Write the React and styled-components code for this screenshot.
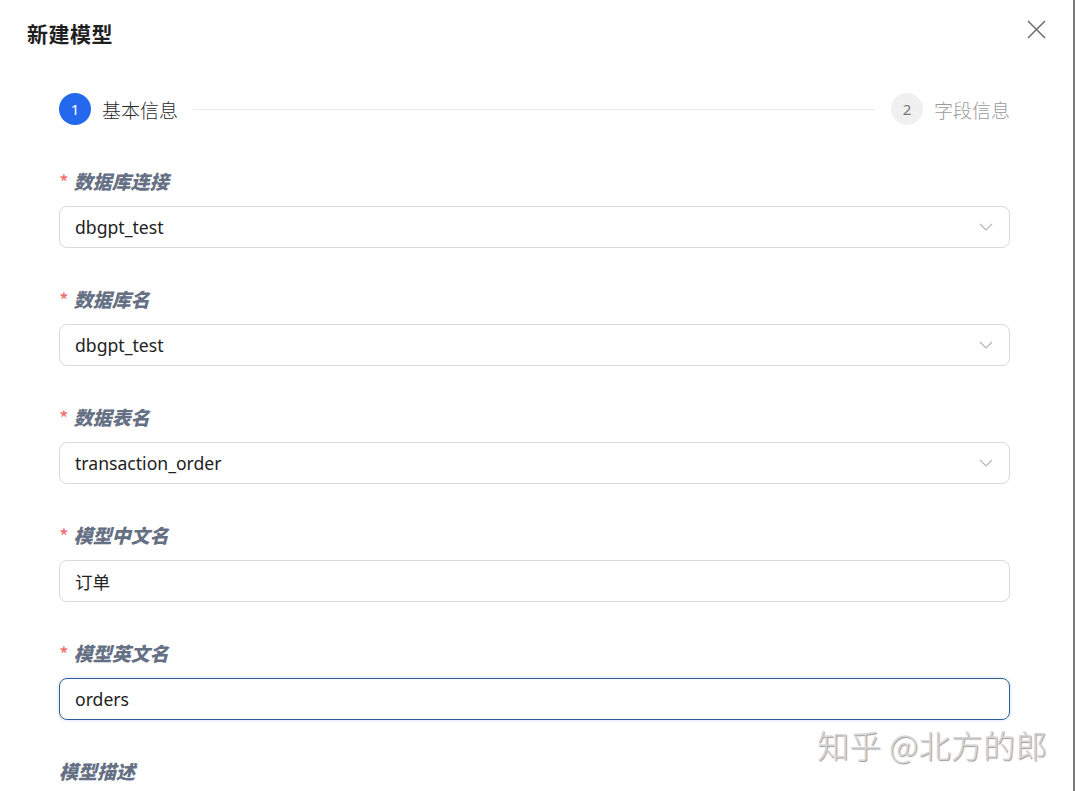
import React from "react";
import styled, { createGlobalStyle } from "styled-components";

const GlobalStyle = createGlobalStyle`
  html, body {
    margin: 0;
    padding: 0;
    background: #ffffff;
  }
  body {
    font-family: "Noto Sans", "Noto Sans CJK SC", sans-serif;
  }
`;

const fields = [
  { label: "数据库连接", value: "dbgpt_test", required: true, select: true },
  { label: "数据库名", value: "dbgpt_test", required: true, select: true },
  { label: "数据表名", value: "transaction_order", required: true, select: true },
  { label: "模型中文名", value: "订单", required: true },
  { label: "模型英文名", value: "orders", required: true, focused: true },
];

function App() {
  return (
    <>
      <GlobalStyle />
      <Drawer>
        <Header>
          <Title>新建模型</Title>
          <CloseButton aria-label="close">
            <svg width="19" height="19" viewBox="0 0 19 19">
              <path d="M1 1 L18 18 M18 1 L1 18" stroke="#6f6f6f" strokeWidth="1.6" fill="none" />
            </svg>
          </CloseButton>
        </Header>

        <Body>
          <Steps>
            <Step>
              <StepDot active>1</StepDot>
              <StepLabel active>基本信息</StepLabel>
            </Step>
            <StepLine />
            <Step>
              <StepDot>2</StepDot>
              <StepLabel>字段信息</StepLabel>
            </Step>
          </Steps>

          <Form>
            {fields.map((f) => (
              <Field key={f.label}>
                <Label>
                  {f.required && <Star>*</Star>}
                  {f.label}
                </Label>
                <Input focused={f.focused}>
                  <span>{f.value}</span>
                  {f.select && (
                    <svg width="14" height="14" viewBox="0 0 14 14">
                      <path d="M1 4 L7 10 L13 4" stroke="#b5b5b5" strokeWidth="1.2" fill="none" />
                    </svg>
                  )}
                </Input>
              </Field>
            ))}
            <Field>
              <Label>模型描述</Label>
            </Field>
          </Form>
        </Body>
        <Watermark>知乎 @北方的郎</Watermark>
      </Drawer>
    </>
  );
}

const Drawer = styled.div`
  position: relative;
  width: 1073px;
  height: 791px;
  overflow: hidden;
  border-right: 2px solid #7a7a7a;
  background: #fff;
`;

const Header = styled.div`
  display: flex;
  align-items: center;
  justify-content: space-between;
  padding: 15px 27px 0 27px;
  height: 36px;
`;

const Title = styled.h2`
  margin: 0;
  font-family: "Noto Sans CJK SC", sans-serif;
  font-size: 21px;
  font-weight: 700;
  color: #1f1f1f;
  letter-spacing: 0.5px;
`;

const CloseButton = styled.button`
  border: none;
  background: none;
  padding: 0;
  display: flex;
  margin-top: -8px;
`;

const Body = styled.div`
  padding: 42px 63px 0 59px;
`;

const Steps = styled.div`
  display: flex;
  align-items: center;
  height: 32px;
`;

const Step = styled.div`
  display: flex;
  align-items: center;
  gap: 11px;
`;

const StepDot = styled.div`
  width: 32px;
  height: 32px;
  border-radius: 50%;
  display: flex;
  align-items: center;
  justify-content: center;
  font-size: 15px;
  background: ${(p) => (p.active ? "#2468ee" : "#f0f0f0")};
  color: ${(p) => (p.active ? "#fff" : "#777")};
`;

const StepLabel = styled.span`
  font-family: "Noto Sans CJK SC", sans-serif;
  font-size: 19px;
  font-weight: 300;
  color: ${(p) => (p.active ? "#2a2a2a" : "#9a9a9a")};
`;

const StepLine = styled.div`
  flex: 1;
  height: 1px;
  background: #e9e9e9;
  margin: 0 16px 0 15px;
`;

const Form = styled.div`
  display: flex;
  flex-direction: column;
  gap: 38px;
  margin-top: 43px;
`;

const Field = styled.div`
  display: flex;
  flex-direction: column;
  gap: 14px;
`;

const Label = styled.div`
  display: flex;
  align-items: center;
  height: 24px;
  font-family: "Noto Sans CJK SC", sans-serif;
  font-size: 19px;
  font-weight: 900;
  font-style: italic;
  color: #667084;
`;

const Star = styled.span`
  color: #ef6b6b;
  font-style: normal;
  font-weight: 400;
  font-size: 21px;
  margin-right: 5px;
  padding-top: 4px;
`;

const Input = styled.div`
  box-sizing: border-box;
  height: 42px;
  display: flex;
  align-items: center;
  justify-content: space-between;
  padding: 0 16px 0 15px;
  border: 1px solid ${(p) => (p.focused ? "#2d5f96" : "#d9d9d9")};
  box-shadow: ${(p) => (p.focused ? "0 0 0 2px rgba(45, 120, 220, 0.08)" : "none")};
  border-radius: 8px;
  font-family: "Noto Sans", "Noto Sans CJK SC", sans-serif;
  font-size: 17.6px;
  color: #222;
`;

const Watermark = styled.div`
  position: absolute;
  left: 817px;
  top: 721px;
  font-family: "Noto Sans CJK SC", sans-serif;
  font-size: 32px;
  font-weight: 300;
  color: #d6d6d6;
  text-shadow: 1px 1px 1px #9a9a9a;
  letter-spacing: 0.3px;
`;

export default App;
